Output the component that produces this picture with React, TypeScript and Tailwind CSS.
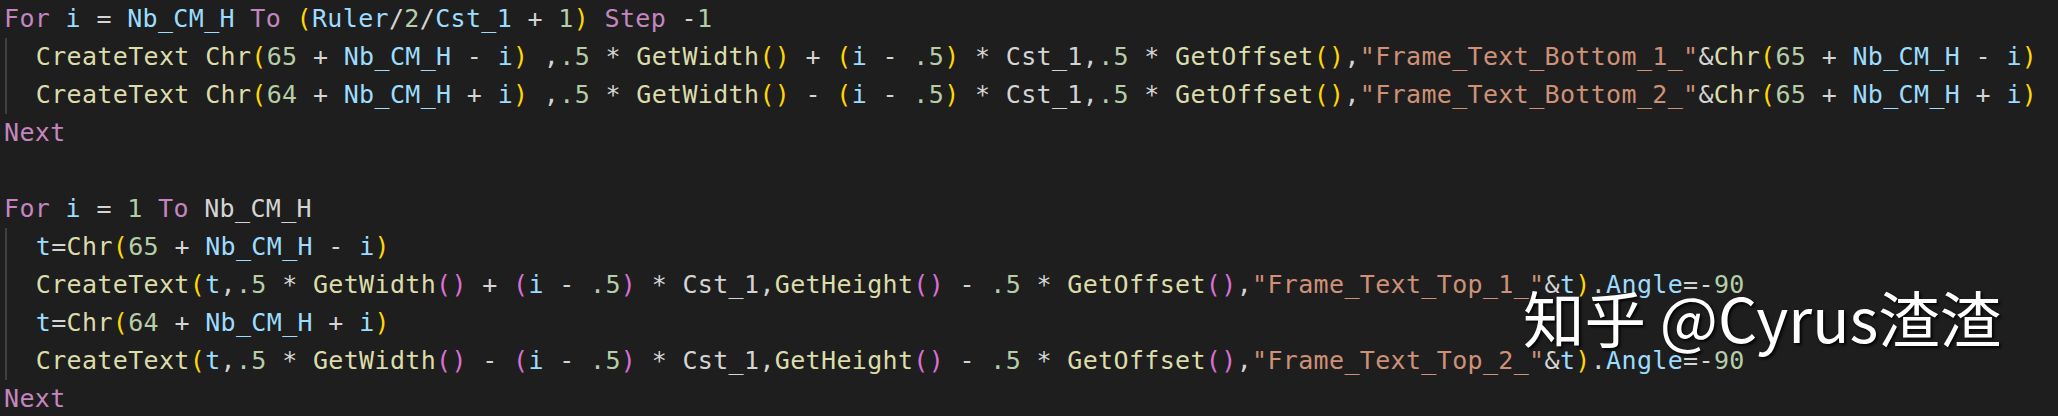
import React from "react";

type Tok = [string, string];

const K = "text-[#C586C0]";
const V = "text-[#9CDCFE]";
const F = "text-[#DCDCAA]";
const N = "text-[#B5CEA8]";
const S = "text-[#CE9178]";
const P = "text-[#D4D4D4]";
const B1 = "text-[#FFD700]";
const B2 = "text-[#DA70D6]";

const Line = ({ toks }: { toks: Tok[] }) => (
  <div className="h-[38px] leading-[38px] whitespace-pre">
    {toks.map(([c, t], i) => (
      <span key={i} className={c}>
        {t}
      </span>
    ))}
  </div>
);

const line1: Tok[] = [
  [K, "For"], [P, " "], [V, "i"], [P, " = "], [V, "Nb_CM_H"], [P, " "], [K, "To"], [P, " "],
  [B1, "("], [V, "Ruler"], [P, "/"], [N, "2"], [P, "/"], [V, "Cst_1"], [P, " + "], [N, "1"], [B1, ")"],
  [P, " "], [K, "Step"], [P, " -"], [N, "1"],
];

const bottom = (a: string, op: string, n: string, op2: string, op3: string): Tok[] => [
  [F, "CreateText"], [P, " "], [F, "Chr"], [B1, "("], [N, a], [P, " + "], [V, "Nb_CM_H"], [P, ` ${op} `], [V, "i"], [B1, ")"],
  [P, " ,"], [N, ".5"], [P, " * "], [F, "GetWidth"], [B1, "()"], [P, ` ${op2} `], [B1, "("], [V, "i"], [P, " - "], [N, ".5"], [B1, ")"],
  [P, " * "], [P, "Cst_1"], [P, ","], [N, ".5"], [P, " * "], [F, "GetOffset"], [B1, "()"], [P, ","],
  [S, `"Frame_Text_Bottom_${n}_"`], [P, "&"], [F, "Chr"], [B1, "("], [N, "65"], [P, " + "], [V, "Nb_CM_H"], [P, ` ${op3} `], [V, "i"], [B1, ")"],
];

const tline = (a: string, op: string): Tok[] => [
  [V, "t"], [P, "="], [F, "Chr"], [B1, "("], [N, a], [P, " + "], [V, "Nb_CM_H"], [P, ` ${op} `], [V, "i"], [B1, ")"],
];

const top = (op: string, n: string): Tok[] => [
  [F, "CreateText"], [B1, "("], [V, "t"], [P, ","], [N, ".5"], [P, " * "], [F, "GetWidth"], [B2, "()"], [P, ` ${op} `],
  [B2, "("], [V, "i"], [P, " - "], [N, ".5"], [B2, ")"], [P, " * "], [P, "Cst_1"], [P, ","], [F, "GetHeight"], [B2, "()"],
  [P, " - "], [N, ".5"], [P, " * "], [F, "GetOffset"], [B2, "()"], [P, ","], [S, `"Frame_Text_Top_${n}_"`], [P, "&"], [V, "t"],
  [B1, ")"], [P, "."], [V, "Angle"], [P, "=-"], [N, "90"],
];

const Block = ({ children }: { children: React.ReactNode }) => (
  <div className="ml-[1px] border-l-2 border-[#404040] pl-[28.8px]">{children}</div>
);

export default function App() {
  return (
    <div className="relative h-[416px] w-full overflow-hidden bg-[#1E1E1E] pl-[4px] font-['DejaVu_Sans_Mono',monospace] text-[25px] tracking-[0.34px]">
      <Line toks={line1} />
      <Block>
        <Line toks={bottom("65", "-", "1", "+", "-")} />
        <Line toks={bottom("64", "+", "2", "-", "+")} />
      </Block>
      <Line toks={[[K, "Next"]]} />
      <Line toks={[]} />
      <Line toks={[[K, "For"], [P, " "], [V, "i"], [P, " = "], [N, "1"], [P, " "], [K, "To"], [P, " "], [P, "Nb_CM_H"]]} />
      <Block>
        <Line toks={tline("65", "-")} />
        <Line toks={top("+", "1")} />
        <Line toks={tline("64", "+")} />
        <Line toks={top("-", "2")} />
      </Block>
      <Line toks={[[K, "Next"]]} />
      <div className="absolute left-[1523px] top-[287px] whitespace-pre font-['Noto_Sans_CJK_SC','Noto_Sans',sans-serif] text-[61.5px] leading-[60px] tracking-normal text-white [text-shadow:2px_2px_3px_rgba(0,0,0,0.85)]">
        知乎 @Cyrus渣渣
      </div>
    </div>
  );
}
